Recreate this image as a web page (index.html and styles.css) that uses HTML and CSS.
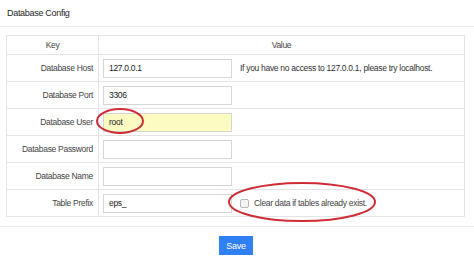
FILE: index.html
```html
<!DOCTYPE html>
<html lang="en">
<head>
    <meta charset="UTF-8">
    <title>Database Config</title>
    <link rel="stylesheet" href="styles.css">
</head>
<body>
    <div class="panel">
        <div class="panel-head">Database Config</div>

        <div class="panel-body">
            <table class="config">
                <tr class="head-row">
                    <th class="key">Key</th>
                    <th>Value</th>
                </tr>
                <tr>
                    <td class="key">Database Host</td>
                    <td><div class="val"><input class="field" value="127.0.0.1"><span class="hint">If you have no access to 127.0.0.1, please try localhost.</span></div></td>
                </tr>
                <tr>
                    <td class="key">Database Port</td>
                    <td><div class="val"><input class="field" value="3306"></div></td>
                </tr>
                <tr>
                    <td class="key">Database User</td>
                    <td><div class="val"><input class="field filled" value="root"></div></td>
                </tr>
                <tr>
                    <td class="key">Database Password</td>
                    <td><div class="val"><input class="field" type="password"></div></td>
                </tr>
                <tr>
                    <td class="key">Database Name</td>
                    <td><div class="val"><input class="field"></div></td>
                </tr>
                <tr>
                    <td class="key">Table Prefix</td>
                    <td><div class="val"><input class="field" value="eps_"><label class="check"><span class="box"></span>Clear data if tables already exist.</label></div></td>
                </tr>
            </table>
        </div>

        <div class="panel-foot">
            <button class="save">Save</button>
        </div>
    </div>

    <!-- red marks drawn over the screenshot -->
    <svg class="marks" width="474" height="261" viewBox="0 0 474 261">
        <ellipse cx="120" cy="121" rx="23" ry="12" />
        <ellipse cx="302" cy="202" rx="73" ry="19" />
    </svg>
</body>
</html>
```

FILE: styles.css
```css
* {
    box-sizing: border-box;
}

body {
    margin: 0;
    font-family: "Liberation Sans", Arial, sans-serif;
    font-size: 8.5px;
    letter-spacing: -0.3px;
    color: #333;
    background: #fff;
    position: relative;
    width: 474px;
    height: 261px;
    overflow: hidden;
}

.panel-head {
    height: 27px;
    padding: 8px 7px 0 7px;
    font-size: 9px;
    color: #1f1f1f;
    border-bottom: 1px solid #ececec;
}

.panel-body {
    padding: 8px 9px 9px 6px;
}

.config {
    width: 459px;
    table-layout: fixed;
    border-collapse: collapse;
    border: 1px solid #e4e4e4;
}

.config th,
.config td {
    border-top: 1px solid #e4e4e4;
    padding: 0;
}

.config th {
    height: 19px;
    font-weight: normal;
    color: #444;
    text-align: center;
}

.config td {
    height: 27px;
}

.config .key {
    width: 92px;
    border-right: 1px solid #e4e4e4;
}

.config td.key {
    text-align: right;
    padding-right: 5px;
    color: #444;
    white-space: nowrap;
}

.val {
    display: flex;
    align-items: center;
    padding-left: 4px;
}

.field {
    width: 129px;
    height: 19px;
    border: 1px solid #d6d6d6;
    padding: 0 5px;
    font-family: inherit;
    font-size: 8.5px;
    letter-spacing: -0.3px;
    color: #222;
    background: #fff;
}

.field.filled {
    background: #fbfbc2;
}

.hint {
    margin-left: 8px;
    color: #333;
    white-space: nowrap;
}

.check {
    display: flex;
    align-items: center;
    margin-left: 8px;
    color: #444;
    white-space: nowrap;
}

.box {
    width: 9px;
    height: 9px;
    border: 1px solid #b8b8b8;
    border-radius: 2px;
    background: #f4f4f4;
    margin-right: 5px;
}

.panel-foot {
    border-top: 1px solid #ececec;
    padding-top: 9px;
    text-align: center;
}

.save {
    width: 34px;
    height: 19px;
    border: none;
    background: #2f80f2;
    color: #fff;
    font-family: inherit;
    font-size: 9px;
    letter-spacing: -0.2px;
    padding: 0;
    margin-left: -2px;
}

.marks {
    position: absolute;
    left: 0;
    top: 0;
    pointer-events: none;
}

.marks ellipse {
    fill: none;
    stroke: #cf2d36;
    stroke-width: 2;
}
```
